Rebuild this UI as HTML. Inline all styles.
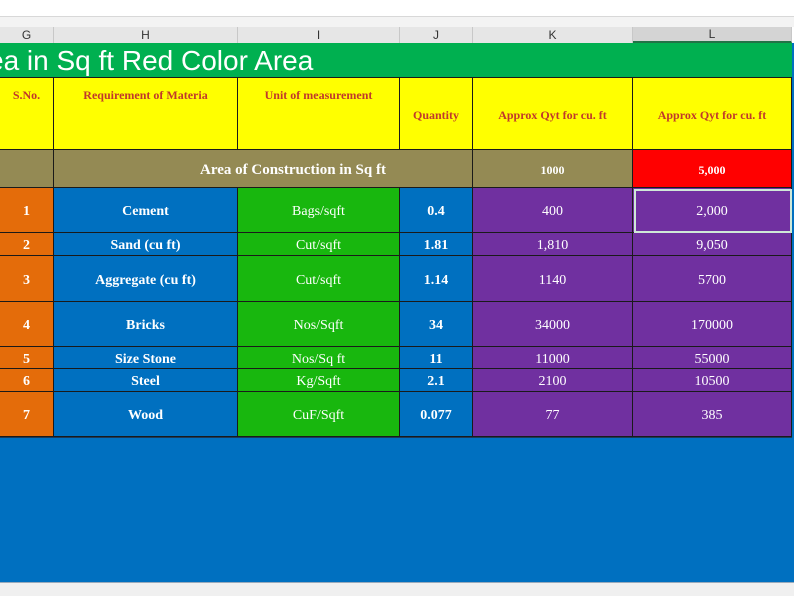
<!DOCTYPE html><html><head><style>
body{margin:0;width:794px;height:596px;position:relative;overflow:hidden;background:#fff;font-family:"Liberation Serif",serif}
div{position:absolute;box-sizing:border-box}
.c{display:flex;align-items:center;justify-content:center;text-align:center;border-right:1px solid #1a1a1a;border-bottom:1px solid #1a1a1a;color:#fff;font-size:14px;padding-top:4px}
.h{background:#e6e6e6;top:27px;height:16px;font-family:"Liberation Sans",sans-serif;font-size:12px;color:#333;display:flex;justify-content:center;align-items:center;border-right:1px solid #c8c8c8}
.y{background:#ff0;color:#c0392b;font-weight:bold;font-size:12px}
.b{font-weight:bold}
.o{background:#e46c0a}.bl{background:#0070c0}.g{background:#18b70e}.p{background:#7030a0}
</style></head><body>
<div style="left:0;top:16px;width:794px;height:11px;background:#f3f3f3;border-top:1px solid #d8d8d8"></div>
<div class="h" style="left:0;width:54px">G</div>
<div class="h" style="left:54px;width:184px">H</div>
<div class="h" style="left:238px;width:162px">I</div>
<div class="h" style="left:400px;width:73px">J</div>
<div class="h" style="left:473px;width:160px">K</div>
<div class="h" style="left:633px;width:159px;background:#d4d4d4;border-bottom:2px solid #217346">L</div>
<div style="left:-12px;top:43px;width:804px;height:35px;background:#00b050;color:#fff;font-family:'Liberation Sans',sans-serif;font-size:28px;line-height:35px;border-bottom:1px solid #1a1a1a">ea in Sq ft Red Color Area</div>
<div style="left:792px;top:43px;width:2px;height:539px;background:#0070c0"></div>
<div class="c y" style="left:0;top:78px;width:54px;height:72px;align-items:flex-start;padding-top:10px">S.No.</div>
<div class="c y" style="left:54px;top:78px;width:184px;height:72px;align-items:flex-start;padding-top:10px">Requirement of Materia</div>
<div class="c y" style="left:238px;top:78px;width:162px;height:72px;align-items:flex-start;padding-top:10px">Unit of measurement</div>
<div class="c y" style="left:400px;top:78px;width:73px;height:72px">Quantity</div>
<div class="c y" style="left:473px;top:78px;width:160px;height:72px">Approx Qyt for cu. ft</div>
<div class="c y" style="left:633px;top:78px;width:159px;height:72px">Approx Qyt for cu. ft</div>
<div class="c" style="left:0;top:150px;width:54px;height:38px;background:#948a54"></div>
<div class="c b" style="left:54px;top:150px;width:419px;height:38px;background:#948a54;font-size:15px;padding-left:60px">Area of Construction in Sq ft</div>
<div class="c b" style="left:473px;top:150px;width:160px;height:38px;background:#948a54;font-size:12px">1000</div>
<div class="c b" style="left:633px;top:150px;width:159px;height:38px;background:#f00;font-size:12px">5,000</div>
<div style="left:0;top:437px;width:792px;height:145px;background:#0070c0;border-top:1px solid #1a3a5a"></div>
<div style="left:0;top:582px;width:794px;height:14px;background:#f0f0f0;border-top:1px solid #9ab"></div>
<script>
var rows=[[188,233,"1","Cement","Bags/sqft","0.4","400","2,000"],[233,256,"2","Sand (cu ft)","Cut/sqft","1.81","1,810","9,050"],[256,302,"3","Aggregate (cu ft)","Cut/sqft","1.14","1140","5700"],[302,347,"4","Bricks","Nos/Sqft","34","34000","170000"],[347,369,"5","Size Stone","Nos/Sq ft","11","11000","55000"],[369,392,"6","Steel","Kg/Sqft","2.1","2100","10500"],[392,437,"7","Wood","CuF/Sqft","0.077","77","385"]];
var cols=[[0,54,"o b"],[54,238,"bl b"],[238,400,"g"],[400,473,"bl b"],[473,633,"p"],[633,792,"p"]];
var h="";rows.forEach(function(r){cols.forEach(function(c,i){h+='<div class="c '+c[2]+'" style="left:'+c[0]+'px;top:'+r[0]+'px;width:'+(c[1]-c[0])+'px;height:'+(r[1]-r[0])+'px">'+r[i+2]+'</div>';});});
document.body.insertAdjacentHTML("beforeend",h);
</script>
<div style="left:634px;top:189px;width:158px;height:44px;border:2px solid #cfe8d8"></div>
</body></html>
